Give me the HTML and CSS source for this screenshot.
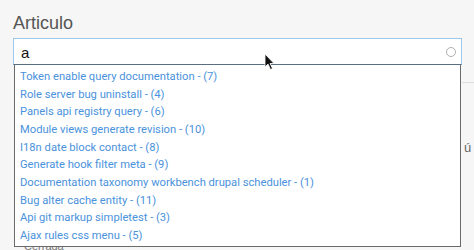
FILE: index.html
```html
<!DOCTYPE html>
<html>
<head>
<meta charset="utf-8">
<link rel="stylesheet" href="styles.css">
</head>
<body>
<div class="page">
  <div class="field">
    <label class="label">Articulo</label>
    <div class="combo">
      <div class="input">
        <span class="value">a</span>
        <span class="spinner"></span>
      </div>
      <ul class="dropdown">
        <li>Token enable query documentation - (7)</li>
        <li>Role server bug uninstall - (4)</li>
        <li>Panels api registry query - (6)</li>
        <li>Module views generate revision - (10)</li>
        <li>I18n date block contact - (8)</li>
        <li>Generate hook filter meta - (9)</li>
        <li>Documentation taxonomy workbench drupal scheduler - (1)</li>
        <li>Bug alter cache entity - (11)</li>
        <li>Api git markup simpletest - (3)</li>
        <li>Ajax rules css menu - (5)</li>
      </ul>
    </div>
  </div>
  <div class="below">
    <div class="below-main">
      <span class="state">Cerrada</span>
    </div>
    <div class="below-side">
      <span class="side-char">ú</span>
    </div>
  </div>
  <svg class="cursor" width="12" height="18" viewBox="0 0 12 18"><path d="M1 1 L1 14 L4 11 L6.5 16.5 L8.5 15.5 L6 10.5 L10 10.5 Z" fill="#111" stroke="#fff" stroke-width="0.8"/></svg>
</div>
</body>
</html>
```
FILE: styles.css
```css
html, body {
  margin: 0;
  padding: 0;
  background: #f6f6f6;
}
.page {
  position: relative;
  width: 474px;
  height: 250px;
  overflow: hidden;
  font-family: "Liberation Sans", Arial, sans-serif;
}
.field {
  padding: 12px 12px 0 13px;
}
.label {
  display: block;
  font-size: 18px;
  color: #555;
  line-height: 22px;
  margin-bottom: 4px;
}
.combo {
  position: relative;
  width: 449px;
}
.input {
  height: 27px;
  box-sizing: border-box;
  border: 1px solid #9cc8ee;
  border-bottom-color: #5a6e80;
  background: #fff;
  display: flex;
  align-items: center;
  justify-content: space-between;
  padding: 0 5px 0 7px;
}
.value {
  font-size: 15px;
  color: #111;
  margin-top: 1px;
}
.spinner {
  width: 8px;
  height: 8px;
  border: 1.5px solid #b0b0b0;
  border-radius: 50%;
}
.dropdown {
  position: absolute;
  left: 1px;
  right: 1px;
  top: 27px;
  margin: 0;
  padding: 3px 0 1px 0;
  list-style: none;
  background: #fff;
  border: 1px solid #6a6a6a;
  border-top: none;
  z-index: 2;
}
.dropdown li {
  font-family: Roboto, "Noto Sans", sans-serif;
  font-size: 11.2px;
  line-height: 17.65px;
  color: #4a92dc;
  padding-left: 5px;
  white-space: nowrap;
}
.below {
  display: grid;
  grid-template-columns: 462px 12px;
  height: 187px;
}
.below-main {
  display: flex;
  align-items: flex-end;
  padding-left: 24px;
}
.state {
  font-size: 11px;
  color: #777;
  line-height: 12px;
}
.below-side {
  border-top: 1px solid #dcdcdc;
  margin-top: 17px;
  padding-top: 55px;
}
.side-char {
  font-size: 13px;
  color: #666;
  margin-left: 2px;
}
.cursor {
  position: absolute;
  left: 264px;
  top: 53px;
  z-index: 3;
}
```
